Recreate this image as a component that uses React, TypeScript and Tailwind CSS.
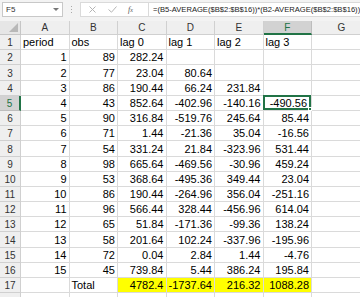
import React from "react";

const cols = ["A", "B", "C", "D", "E", "F", "G"];

type Row = [string, string, string, string, string, string, string];

const data: Row[] = [
  ["period", "obs", "lag 0", "lag 1", "lag 2", "lag 3", ""],
  ["1", "89", "282.24", "", "", "", ""],
  ["2", "77", "23.04", "80.64", "", "", ""],
  ["3", "86", "190.44", "66.24", "231.84", "", ""],
  ["4", "43", "852.64", "-402.96", "-140.16", "-490.56", ""],
  ["5", "90", "316.84", "-519.76", "245.64", "85.44", ""],
  ["6", "71", "1.44", "-21.36", "35.04", "-16.56", ""],
  ["7", "54", "331.24", "21.84", "-323.96", "531.44", ""],
  ["8", "98", "665.64", "-469.56", "-30.96", "459.24", ""],
  ["9", "53", "368.64", "-495.36", "349.44", "23.04", ""],
  ["10", "86", "190.44", "-264.96", "356.04", "-251.16", ""],
  ["11", "96", "566.44", "328.44", "-456.96", "614.04", ""],
  ["12", "65", "51.84", "-171.36", "-99.36", "138.24", ""],
  ["13", "58", "201.64", "102.24", "-337.96", "-195.96", ""],
  ["14", "72", "0.04", "2.84", "1.44", "-4.76", ""],
  ["15", "45", "739.84", "5.44", "386.24", "195.84", ""],
  ["", "Total", "4782.4", "-1737.64", "216.32", "1088.28", ""],
  ["", "", "", "", "", "", ""],
];

export default function App() {
  const font = { fontFamily: '"Liberation Sans", Arial, sans-serif' };
  return (
    <div className="w-[360px] h-[297px] overflow-hidden bg-white" style={font}>
      {/* formula bar */}
      <div className="h-[21px] bg-[#f3f3f3] flex items-start pt-[2px] pl-[2px]">
        <div className="w-[61px] h-[15px] bg-white border border-[#c8c8c8] flex items-center justify-between px-[3px]">
          <span className="text-[8px] text-[#333]">F5</span>
          <svg width="6" height="4" viewBox="0 0 6 4">
            <path d="M0 0 L6 0 L3 3 Z" fill="#777" />
          </svg>
        </div>
        <div className="w-[17px] h-[15px] flex flex-col items-center justify-center gap-[2px]">
          <span className="w-[1px] h-[1px] bg-[#aaa]" />
          <span className="w-[1px] h-[1px] bg-[#aaa]" />
          <span className="w-[1px] h-[1px] bg-[#aaa]" />
        </div>
        <div className="w-[68px] h-[15px] bg-white border border-[#dadada] border-r-0 flex items-center">
          <svg className="ml-[8px]" width="7" height="7" viewBox="0 0 7 7">
            <path d="M0.5 0.5 L6.5 6.5 M6.5 0.5 L0.5 6.5" stroke="#b5b5b5" strokeWidth="1" />
          </svg>
          <svg className="ml-[12px]" width="9" height="7" viewBox="0 0 9 7">
            <path d="M0.5 3.5 L3.5 6.2 L8.5 0.5" stroke="#b5b5b5" strokeWidth="1" fill="none" />
          </svg>
          <span className="ml-[11px] text-[8px] italic text-[#555]" style={{ fontFamily: '"Liberation Serif", serif' }}>
            f<span className="text-[6px]">x</span>
          </span>
        </div>
        <div className="flex-1 h-[15px] bg-white border border-[#dadada] border-r-0 flex items-center pl-[4px] overflow-hidden">
          <span className="text-[7.6px] text-[#222] whitespace-nowrap">
            =(B5-AVERAGE($B$2:$B$16))*(B2-AVERAGE($B$2:$B$16))
          </span>
        </div>
      </div>

      {/* grid */}
      <div className="grid grid-cols-[21px_48.5px_48.5px_48.5px_48.5px_48.5px_48.5px_60px] grid-rows-[14px] auto-rows-[15.2px]">
        {/* header row */}
        <div className="bg-[#e6e6e6] border-r border-b border-[#c6c6c6] relative">
          <svg className="absolute right-[2px] bottom-[2px]" width="9" height="9" viewBox="0 0 9 9">
            <path d="M9 0 L9 9 L0 9 Z" fill="#b8b8b8" />
          </svg>
        </div>
        {cols.map((c) =>
          c === "F" ? (
            <div
              key={c}
              className="bg-[#d2d2d2] border-r border-b-2 border-r-[#bdbdbd] border-b-[#217346] flex items-center justify-center text-[10px] text-[#217346]"
            >
              {c}
            </div>
          ) : (
            <div
              key={c}
              className="bg-[#efefef] border-r border-b border-[#d0d0d0] flex items-center justify-center text-[10px] text-[#333]"
            >
              {c}
            </div>
          )
        )}

        {data.map((row, ri) => {
          const rn = ri + 1;
          const sel = rn === 5;
          return (
            <React.Fragment key={rn}>
              <div
                className={
                  sel
                    ? "bg-[#d2d2d2] border-r-2 border-b border-r-[#217346] border-b-[#bdbdbd] flex items-end justify-center text-[10px] text-[#217346] leading-[13px]"
                    : "bg-[#efefef] border-r border-b border-[#d0d0d0] flex items-end justify-center text-[10px] text-[#333] leading-[13px]"
                }
              >
                {rn <= 17 ? rn : ""}
              </div>
              {row.map((v, ci) => {
                const isText = rn === 1 || v === "Total";
                const yellow = rn === 17 && ci >= 2 && ci <= 5;
                const selected = rn === 5 && ci === 5;
                return (
                  <div
                    key={ci}
                    className={
                      "relative border-r border-b border-[#dadada] flex items-end text-[11px] leading-[13px] text-black whitespace-nowrap overflow-visible " +
                      (isText ? "justify-start pl-[2px] " : selected ? "justify-end pr-[4px] " : "justify-end pr-[2px] ") +
                      (yellow ? "bg-[#ffff00] " : "")
                    }
                  >
                    {selected && (
                      <div className="absolute -left-[1px] -top-[1px] w-[calc(100%+1px)] h-[calc(100%+1px)] border-2 border-[#217346]">
                        <div className="absolute -right-[3px] -bottom-[3px] w-[4px] h-[4px] bg-[#217346] border border-white" />
                      </div>
                    )}
                    <span className="relative">{v}</span>
                  </div>
                );
              })}
            </React.Fragment>
          );
        })}
      </div>
    </div>
  );
}
